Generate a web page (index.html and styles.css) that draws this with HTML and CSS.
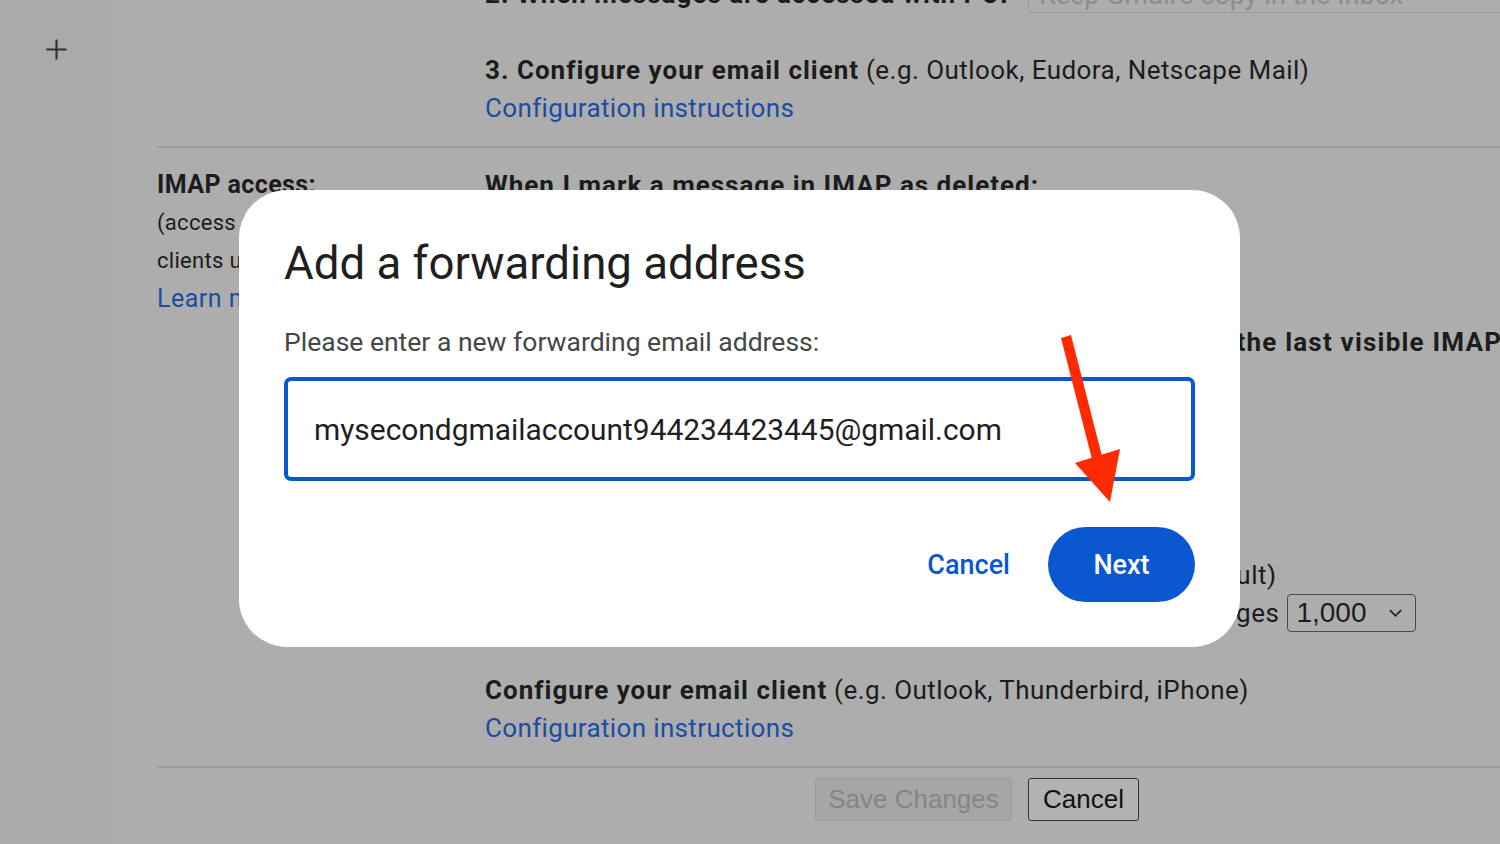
FILE: index.html
```html
<!DOCTYPE html>
<html lang="en">
<head>
<meta charset="utf-8">
<title>Gmail settings - Add a forwarding address</title>
<link rel="stylesheet" href="styles.css">
</head>
<body>
<div class="app">
  <aside class="rail">
    <svg class="plus" viewBox="0 0 24 24" aria-hidden="true"><path d="M12 1.5v21M1.5 12h21" stroke="#2f2f2f" stroke-width="2.2" fill="none"/></svg>
  </aside>
  <main class="settings">
    <section class="row pop">
      <div class="label"></div>
      <div class="content">
        <div class="line step"><b>2. When messages are accessed with POP</b><span class="select ghost">Keep Gmail's copy in the Inbox</span></div>
        <div class="line spaced"><b>3. Configure your email client</b> (e.g. Outlook, Eudora, Netscape Mail)</div>
        <a class="line link">Configuration instructions</a>
      </div>
    </section>
    <hr class="rule">
    <section class="row imap">
      <div class="label">
        <div class="lab-title">IMAP access:</div>
        <div class="lab-desc">(access Gmail from other clients using IMAP)</div>
        <a class="lab-link">Learn more</a>
      </div>
      <div class="content">
        <div class="line"><b>When I mark a message in IMAP as deleted:</b></div>
        <div class="line opt"><span class="radio"></span>Auto-Expunge on - Immediately update the server. (default)</div>
        <div class="line opt"><span class="radio"></span>Auto-Expunge off - Wait for the client to update the server.</div>
        <div class="line head wide"><b>When a message is marked as deleted and expunged from the last visible IMAP folder:</b></div>
        <div class="line opt"><span class="radio"></span>Archive the message (default)</div>
        <div class="line opt"><span class="radio"></span>Move the message to the Trash</div>
        <div class="line opt"><span class="radio"></span>Immediately delete the message forever</div>
        <div class="line head"><b>Folder size limits</b></div>
        <div class="line opt"><span class="radio"></span>Do not limit the number of messages in an IMAP folder (default)</div>
        <div class="line opt"><span class="radio"></span>Limit IMAP folders to contain no more than this many messages <span class="select small">1,000<svg class="chev" viewBox="0 0 16 10"><path d="M2 2l6 6 6-6" stroke="#222" stroke-width="1.8" fill="none"/></svg></span></div>
        <div class="line spaced2"><b>Configure your email client</b> (e.g. Outlook, Thunderbird, iPhone)</div>
        <a class="line link">Configuration instructions</a>
      </div>
    </section>
    <hr class="rule">
    <div class="actions">
      <button class="btn disabled">Save Changes</button>
      <button class="btn">Cancel</button>
    </div>
  </main>
</div>

<div class="dialog" role="dialog" aria-label="Add a forwarding address">
  <h1 class="dlg-title">Add a forwarding address</h1>
  <p class="dlg-label">Please enter a new forwarding email address:</p>
  <div class="dlg-input">mysecondgmailaccount944234423445@gmail.com</div>
  <div class="dlg-actions">
    <button class="dlg-cancel">Cancel</button>
    <button class="dlg-next">Next</button>
  </div>
</div>

<svg class="arrow" viewBox="1050 330 80 180" aria-hidden="true">
  <polygon points="1061,338 1071,335 1104,464 1094,467" fill="#ff2a00"/>
  <polygon points="1075,463 1120,449 1110,502" fill="#ff2a00"/>
</svg>
</body>
</html>
```
FILE: styles.css
```css
* { box-sizing: border-box; }
html, body { margin: 0; padding: 0; }
body {
  width: 1500px;
  height: 844px;
  overflow: hidden;
  background: #adadad;
  font-family: Roboto, "Liberation Sans", Arial, sans-serif;
  color: #1c1c1c;
  position: relative;
}
.app {
  display: flex;
  height: 844px;
  overflow: hidden;
}
.rail {
  width: 112px;
  flex: none;
  background: #a9aaac;
  padding: 38px 0 0 45px;
}
.plus { width: 23px; height: 23px; display: block; }

.settings {
  flex: 1;
  margin-top: -25px;
  padding-left: 45px;
  min-width: 0;
  overflow: hidden;
}
.row {
  display: grid;
  grid-template-columns: 328px 1fr;
}
.content { min-width: 0; }
.line {
  display: block;
  font-size: 26px;
  letter-spacing: 0.45px;
  line-height: 38px;
  white-space: nowrap;
}
.line b { font-weight: 700; letter-spacing: 1px; }
.wide b { letter-spacing: 1.2px; }
.step { display: flex; align-items: center; gap: 10px; }
.spaced { margin-top: 38px; }
.link { color: #1b4ca3; text-decoration: none; letter-spacing: 0.35px; }
.pop { padding-bottom: 19px; }
.rule {
  margin: 0;
  border: 0;
  height: 2px;
  background: #9c9c9c;
}
.imap { padding-top: 18px; padding-bottom: 19px; }
.head { margin-top: 43px; }
.spaced2 { margin-top: 39px; }
.opt { display: flex; align-items: center; letter-spacing: 0.5px; }
.radio {
  width: 16px; height: 16px;
  border: 2px solid #555;
  border-radius: 50%;
  margin: 0 6px 0 0;
  flex: none;
}
.select {
  display: inline-flex;
  align-items: center;
  border-radius: 4px;
  font-family: "Liberation Sans", Arial, sans-serif;
  letter-spacing: 0;
}
.ghost {
  height: 40px;
  margin-top: -2px;
  padding: 0 10px;
  width: 520px;
  flex: none;
  border: 1.5px solid #999;
  color: #8c8c8c;
  font-family: Roboto, "Liberation Sans", sans-serif;
  font-size: 27px;
  line-height: 30px;
  padding-top: 4px;
}
.small {
  height: 38px;
  width: 129px;
  flex: none;
  margin-left: 8px;
  border: 1.5px solid #4a4a4a;
  padding: 0 12px 0 8px;
  font-size: 28px;
  color: #1c1c1c;
  justify-content: space-between;
}
.chev { width: 15px; height: 10px; }

.label { padding-right: 12px; }
.lab-title { font-size: 25px; font-weight: 700; line-height: 38px; letter-spacing: 0.4px; }
.lab-desc { font-size: 22px; line-height: 38px; width: 310px; letter-spacing: 0.3px; }
.lab-link { display: block; font-size: 25px; line-height: 38px; color: #1b4ca3; letter-spacing: 0.5px; }

.actions {
  display: flex;
  gap: 16px;
  padding: 10px 0 0 658px;
}
.btn {
  font-family: "Liberation Sans", Arial, sans-serif;
  font-size: 26px;
  height: 43px;
  padding: 0 14px;
  white-space: nowrap;
  background: #b2b2b2;
  color: #111;
  border: 1.5px solid #333;
  border-radius: 3px;
}
.btn.disabled {
  background: #a6a6a6;
  color: #858585;
  border-color: #999;
  width: 197px;
  padding: 0;
}

.dialog {
  position: absolute;
  left: 239px;
  top: 190px;
  width: 1001px;
  height: 457px;
  background: #fff;
  border-radius: 48px;
  padding: 46px 45px 45px 45px;
  font-family: Roboto, "Open Sans", sans-serif;
}
.dlg-title {
  margin: 0;
  font-size: 45.6px;
  font-weight: 400;
  line-height: 56px;
  color: #1f1f1f;
}
.dlg-label {
  margin: 32px 0 0;
  font-size: 26.5px;
  line-height: 36px;
  color: #444746;
}
.dlg-input {
  margin-top: 17px;
  height: 104px;
  border: 4px solid #0b57d0;
  border-radius: 7px;
  padding: 0 26px;
  display: flex;
  align-items: center;
  font-size: 29.9px;
  color: #1f1f1f;
}
.dlg-actions {
  margin-top: 46px;
  display: flex;
  justify-content: flex-end;
  align-items: center;
  gap: 14px;
}
.dlg-cancel, .dlg-next {
  font-family: Roboto, "Open Sans", sans-serif;
  font-size: 27px;
  font-weight: 500;
  border: 0;
  height: 75px;
  border-radius: 38px;
}
.dlg-cancel {
  background: transparent;
  color: #0b57d0;
  padding: 0 24px;
}
.dlg-next {
  background: #0b57d0;
  color: #fff;
  width: 147px;
}

.arrow {
  position: absolute;
  left: 1050px;
  top: 330px;
  width: 80px;
  height: 180px;
}
```
